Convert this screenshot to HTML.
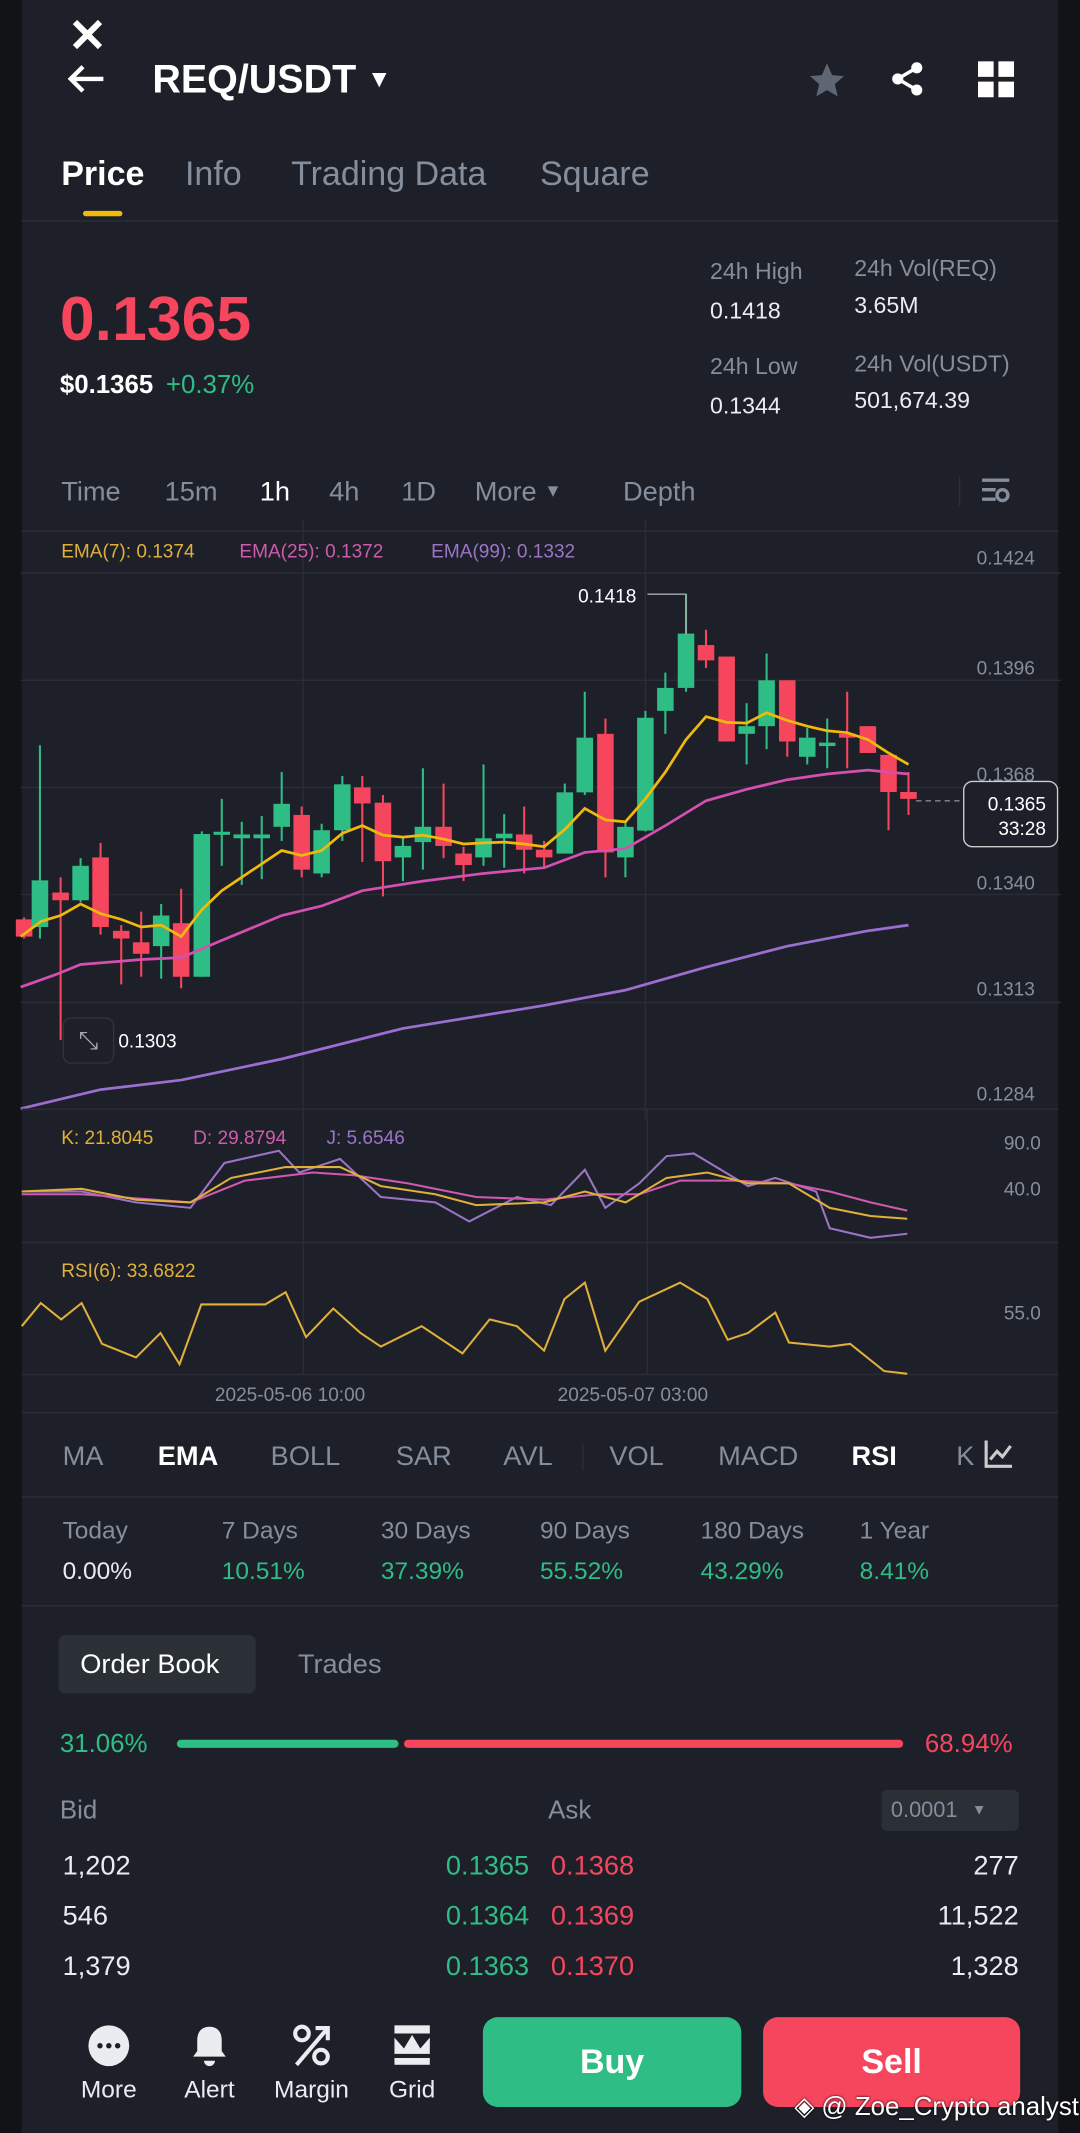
<!DOCTYPE html>
<html><head><meta charset="utf-8"><style>
*{margin:0;padding:0;box-sizing:border-box}
html,body{width:1080px;height:2132px;overflow:hidden;background:#121316}
#w{position:absolute;left:0;top:0;width:794px;height:1568px;transform:scale(1.36020);transform-origin:0 0;font-family:"Liberation Sans",sans-serif;color:#eaecef}
#p{position:absolute;left:16px;top:0;width:762px;height:1568px;background:#1e2029}
.t{position:absolute;white-space:nowrap;line-height:1}
.g{color:#848e9c}.gr{color:#2ebd85}.rd{color:#f6465d}.y{color:#f0b90b}
.ln{position:absolute;left:16px;width:762px;height:1px;background:#2b2f36}
</style></head><body><div id="w"><div id="p"></div>
<div class="t" style="left:50px;top:10px;font-size:34px;font-weight:bold;color:#fff">✕</div>
<svg style="position:absolute;left:48px;top:46px" width="30" height="24"><path d="M28 12H4M13 3L4 12l9 9" stroke="#fff" stroke-width="3.2" fill="none"/></svg>
<div class="t" style="left:112px;top:45px;font-size:29px;font-weight:bold;color:#fff">REQ/USDT <span style="font-size:18px;vertical-align:4px">▼</span></div>
<svg style="position:absolute;left:593px;top:44px" width="30" height="30" viewBox="0 0 24 24"><path d="M12 2l3 7 7 .6-5.4 4.7 1.7 7.2L12 17.8 5.7 21.5l1.7-7.2L2 9.6 9 9z" fill="#5e6673"/></svg>
<svg style="position:absolute;left:653px;top:43px" width="28" height="30" viewBox="0 0 24 24"><circle cx="18" cy="5" r="3.5" fill="#fff"/><circle cx="6" cy="12" r="3.5" fill="#fff"/><circle cx="18" cy="19" r="3.5" fill="#fff"/><path d="M18 5L6 12l12 7" stroke="#fff" stroke-width="2.2" fill="none"/></svg>
<svg style="position:absolute;left:719px;top:45px" width="27" height="27"><rect x="0" y="0" width="11.5" height="11.5" fill="#fff"/><rect x="15" y="0" width="11.5" height="11.5" fill="#fff"/><rect x="0" y="15" width="11.5" height="11.5" fill="#fff"/><rect x="15" y="15" width="11.5" height="11.5" fill="#fff"/></svg>
<div class="t" style="left:45px;top:116px;font-size:25px;font-weight:bold;color:#fff">Price</div>
<div class="t g" style="left:136px;top:116px;font-size:25px">Info</div>
<div class="t g" style="left:214px;top:116px;font-size:25px">Trading Data</div>
<div class="t g" style="left:397px;top:116px;font-size:25px">Square</div>
<div style="position:absolute;left:61px;top:155px;width:29px;height:4px;background:#f0b90b;border-radius:2px"></div>
<div class="ln" style="top:162px"></div>
<div class="t rd" style="left:44px;top:211px;font-size:46px;font-weight:bold">0.1365</div>
<div class="t" style="left:44px;top:274px;font-size:19px;font-weight:bold;color:#fff">$0.1365 <span class="gr" style="font-weight:normal;margin-left:4px">+0.37%</span></div>
<div class="t g" style="left:522px;top:191px;font-size:17px">24h High</div>
<div class="t" style="left:522px;top:220px;font-size:17px">0.1418</div>
<div class="t g" style="left:522px;top:261px;font-size:17px">24h Low</div>
<div class="t" style="left:522px;top:290px;font-size:17px">0.1344</div>
<div class="t g" style="left:628px;top:189px;font-size:17px">24h Vol(REQ)</div>
<div class="t" style="left:628px;top:216px;font-size:17px">3.65M</div>
<div class="t g" style="left:628px;top:259px;font-size:17px">24h Vol(USDT)</div>
<div class="t" style="left:628px;top:286px;font-size:17px">501,674.39</div>
<div class="t g" style="left:45px;top:352px;font-size:20px">Time</div>
<div class="t g" style="left:121px;top:352px;font-size:20px">15m</div>
<div class="t" style="left:191px;top:352px;font-size:20px;color:#fff">1h</div>
<div class="t g" style="left:242px;top:352px;font-size:20px">4h</div>
<div class="t g" style="left:295px;top:352px;font-size:20px">1D</div>
<div class="t g" style="left:349px;top:352px;font-size:20px">More <span style="font-size:13px;vertical-align:3px">▼</span></div>
<div class="t g" style="left:458px;top:352px;font-size:20px">Depth</div>
<div style="position:absolute;left:705px;top:350px;width:1px;height:22px;background:#2b2f36"></div>
<svg style="position:absolute;left:720px;top:350px" width="24" height="22"><path d="M2 3h20M2 10h10M2 17h10" stroke="#848e9c" stroke-width="2.5"/><circle cx="17" cy="14" r="4" stroke="#848e9c" stroke-width="2.5" fill="none"/></svg>
<div class="ln" style="top:390px"></div>
<svg style="position:absolute;left:0;top:382px" width="794" height="441" viewBox="0 0 1568 1568" preserveAspectRatio="none">
<g stroke="#2a2d36" stroke-width="1" vector-effect="non-scaling-stroke">
<line x1="30" y1="140" x2="1540" y2="140" vector-effect="non-scaling-stroke"/><line x1="30" y1="420" x2="1540" y2="420" vector-effect="non-scaling-stroke"/><line x1="30" y1="700" x2="1540" y2="700" vector-effect="non-scaling-stroke"/><line x1="30" y1="980" x2="1540" y2="980" vector-effect="non-scaling-stroke"/><line x1="30" y1="1262" x2="1540" y2="1262" vector-effect="non-scaling-stroke"/><line x1="440" y1="0" x2="440" y2="1568" vector-effect="non-scaling-stroke"/><line x1="937" y1="0" x2="937" y2="1568" vector-effect="non-scaling-stroke"/>
</g>
<g id="c"></g>
<polyline fill="none" stroke="#9b6fd0" stroke-width="2" vector-effect="non-scaling-stroke" points="30,1540 146,1490 263,1465 409,1410 585,1330 790,1270 908,1230 1025,1170 1143,1115 1260,1075 1319,1060"/>
<polyline fill="none" stroke="#d54fb0" stroke-width="2" vector-effect="non-scaling-stroke" points="30,1222 80,1190 117,1163 205,1150 263,1145 322,1100 409,1035 467,1010 526,970 614,945 702,925 790,910 849,870 908,860 966,800 1025,735 1084,705 1143,680 1201,665 1260,655 1319,665"/>
<polyline fill="none" stroke="#f0b90b" stroke-width="2" vector-effect="non-scaling-stroke" points="30,1090 60,1050 88,1035 117,1005 146,1030 176,1045 205,1065 234,1060 263,1090 293,1020 322,970 351,935 380,900 409,865 438,878 467,865 497,820 526,800 556,825 585,830 614,825 644,835 673,848 702,845 732,843 761,848 790,855 820,810 849,755 879,785 908,790 937,730 966,660 996,575 1025,515 1055,530 1084,532 1113,505 1143,525 1172,540 1201,552 1230,557 1260,575 1290,610 1319,640"/>
<polyline fill="none" stroke="#aaa" stroke-width="1" vector-effect="non-scaling-stroke" points="940,195 996,195 996,300"/>
<line x1="1330" y1="735" x2="1400" y2="735" stroke="#888" stroke-dasharray="4 3" stroke-width="1" vector-effect="non-scaling-stroke"/>
</svg>
<script>
var d=[[35,1045,1090,1040,1095,0],[58,943,1065,590,1095,1],[88,975,995,935,1360,0],[117,905,995,885,1000,1],[146,883,1065,845,1085,0],[176,1075,1095,1060,1215,0],[205,1105,1135,1025,1195,0],[234,1035,1115,1005,1200,1],[263,1055,1195,965,1225,0],[293,822,1195,815,1195,1],[322,816,824,730,905,1],[351,823,833,790,955,1],[380,823,833,775,940,1],[409,743,803,660,840,1],[438,772,915,750,935,0],[467,812,925,795,935,1],[497,692,812,670,840,1],[526,700,742,670,895,0],[556,740,893,720,985,0],[585,853,883,830,945,1],[614,803,843,650,915,1],[644,803,853,690,885,0],[673,873,903,855,945,0],[702,833,883,640,905,1],[732,821,833,770,910,1],[761,823,863,750,925,0],[790,863,883,840,910,0],[820,713,873,690,873,1],[849,570,713,450,720,1],[879,560,870,520,935,0],[908,803,883,790,935,1],[937,518,813,500,815,1],[966,440,500,400,560,1],[996,298,440,195,450,1],[1025,328,368,288,388,0],[1055,358,580,358,580,0],[1084,540,560,480,640,1],[1113,420,540,350,600,1],[1143,420,580,420,620,0],[1172,570,620,545,640,1],[1201,583,592,520,650,1],[1230,560,570,450,650,0],[1260,540,610,540,610,0],[1290,615,712,615,812,0],[1319,712,730,660,772,0]];
var s='';d.forEach(function(a){var c=a[5]?'#2ebd85':'#f6465d';s+='<rect x="'+(a[0]-1.5)+'" y="'+a[3]+'" width="3" height="'+(a[4]-a[3])+'" fill="'+c+'"/><rect x="'+(a[0]-12)+'" y="'+a[1]+'" width="24" height="'+Math.max(4,a[2]-a[1])+'" fill="'+c+'"/>';});
document.getElementById('c').innerHTML=s;
</script>
<div class="t" style="left:45px;top:398px;font-size:14px;color:#e0b03a">EMA(7): 0.1374</div>
<div class="t" style="left:176px;top:398px;font-size:14px;color:#cf5aae">EMA(25): 0.1372</div>
<div class="t" style="left:317px;top:398px;font-size:14px;color:#9b74c8">EMA(99): 0.1332</div>
<div class="t" style="left:425px;top:431px;font-size:14px;color:#fff">0.1418</div>
<div class="t" style="left:87px;top:758px;font-size:14px;color:#fff">0.1303</div>
<div style="position:absolute;left:46px;top:748px;width:38px;height:34px;border:1px solid #333;border-radius:6px;color:#aaa;font-size:18px;text-align:center;line-height:32px">⤡</div>
<div class="t g" style="left:718px;top:403px;font-size:14px">0.1424</div>
<div class="t g" style="left:718px;top:484px;font-size:14px">0.1396</div>
<div class="t g" style="left:718px;top:562px;font-size:14px">0.1368</div>
<div class="t g" style="left:718px;top:642px;font-size:14px">0.1340</div>
<div class="t g" style="left:718px;top:720px;font-size:14px">0.1313</div>
<div class="t g" style="left:718px;top:797px;font-size:14px">0.1284</div>
<div style="position:absolute;left:708px;top:574px;width:70px;height:49px;border:1.5px solid #ccc;border-radius:7px;background:#1e2029;font-size:14px;color:#fff;text-align:right;padding:7px 8px 0 0;line-height:18px">0.1365<br>33:28</div>
<div class="ln" style="top:815px;background:#2a2d36"></div>
<div class="t" style="left:45px;top:829px;font-size:14px;color:#e0b03a">K: 21.8045</div>
<div class="t" style="left:142px;top:829px;font-size:14px;color:#cf5aae">D: 29.8794</div>
<div class="t" style="left:240px;top:829px;font-size:14px;color:#9b74c8">J: 5.6546</div>
<div class="t g" style="left:738px;top:833px;font-size:14px">90.0</div>
<div class="t g" style="left:738px;top:867px;font-size:14px">40.0</div>
<div class="ln" style="top:913px;background:#2a2d36"></div>
<div class="t" style="left:45px;top:927px;font-size:14px;color:#e0b03a">RSI(6): 33.6822</div>
<div class="t g" style="left:738px;top:958px;font-size:14px">55.0</div>
<div class="ln" style="top:1010px;background:#2a2d36"></div>
<svg style="position:absolute;left:0;top:0" width="794" height="1040">
<line x1="223" y1="815" x2="223" y2="1010" stroke="#2a2d36"/><line x1="476" y1="815" x2="476" y2="1010" stroke="#2a2d36"/>
<polyline fill="none" stroke="#9b74c8" stroke-width="1.5" points="16,876 60,876 100,884 140,888 165,855 205,846 220,862 250,852 280,880 320,884 345,898 380,880 405,886 430,860 445,888 470,870 490,850 510,848 530,860 550,872 570,866 600,876 610,903 640,910 667,907"/>
<polyline fill="none" stroke="#cf5aae" stroke-width="1.5" points="16,878 60,878 140,884 180,868 230,862 260,864 300,870 350,880 400,882 440,878 470,878 500,868 540,868 580,870 610,876 640,884 667,890"/>
<polyline fill="none" stroke="#e0b03a" stroke-width="1.5" points="16,876 60,874 100,882 140,884 170,866 210,858 250,858 280,872 320,878 350,886 400,884 430,876 460,884 490,866 520,862 550,870 580,870 610,888 640,894 667,896"/>
<polyline fill="none" stroke="#e0b03a" stroke-width="1.5" points="16,975 30,958 45,970 60,958 75,988 100,998 118,980 132,1003 148,959 195,959 210,950 225,983 245,962 265,980 280,990 310,975 340,995 360,970 380,975 400,993 415,955 430,943 445,993 470,957 500,943 520,955 535,985 550,980 570,965 580,987 610,990 625,988 650,1008 667,1010"/>
</svg>
<div class="t g" style="left:158px;top:1018px;font-size:14px">2025-05-06 10:00</div>
<div class="t g" style="left:410px;top:1018px;font-size:14px">2025-05-07 03:00</div>
<div class="ln" style="top:1038px"></div>
<div class="t g" style="left:46px;top:1061px;font-size:20px">MA</div>
<div class="t" style="left:116px;top:1061px;font-size:20px;color:#fff;font-weight:bold">EMA</div>
<div class="t g" style="left:199px;top:1061px;font-size:20px">BOLL</div>
<div class="t g" style="left:291px;top:1061px;font-size:20px">SAR</div>
<div class="t g" style="left:370px;top:1061px;font-size:20px">AVL</div>
<div style="position:absolute;left:428px;top:1061px;width:1px;height:20px;background:#2b2f36"></div>
<div class="t g" style="left:448px;top:1061px;font-size:20px">VOL</div>
<div class="t g" style="left:528px;top:1061px;font-size:20px">MACD</div>
<div class="t" style="left:626px;top:1061px;font-size:20px;color:#fff;font-weight:bold">RSI</div>
<div class="t g" style="left:703px;top:1061px;font-size:20px">K</div>
<svg style="position:absolute;left:723px;top:1058px" width="22" height="22"><path d="M2 1v19h19M5 15l5-6 4 4 6-8" stroke="#ccc" stroke-width="2.3" fill="none"/></svg>
<div class="ln" style="top:1100px"></div>
<div class="t g" style="left:46px;top:1116px;font-size:18px">Today</div>
<div class="t g" style="left:163px;top:1116px;font-size:18px">7 Days</div>
<div class="t g" style="left:280px;top:1116px;font-size:18px">30 Days</div>
<div class="t g" style="left:397px;top:1116px;font-size:18px">90 Days</div>
<div class="t g" style="left:515px;top:1116px;font-size:18px">180 Days</div>
<div class="t g" style="left:632px;top:1116px;font-size:18px">1 Year</div>
<div class="t" style="left:46px;top:1146px;font-size:18px">0.00%</div>
<div class="t gr" style="left:163px;top:1146px;font-size:18px">10.51%</div>
<div class="t gr" style="left:280px;top:1146px;font-size:18px">37.39%</div>
<div class="t gr" style="left:397px;top:1146px;font-size:18px">55.52%</div>
<div class="t gr" style="left:515px;top:1146px;font-size:18px">43.29%</div>
<div class="t gr" style="left:632px;top:1146px;font-size:18px">8.41%</div>
<div class="ln" style="top:1180px"></div>
<div style="position:absolute;left:43px;top:1202px;width:145px;height:43px;background:#2b2f36;border-radius:5px"></div>
<div class="t" style="left:59px;top:1214px;font-size:20px;color:#fff">Order Book</div>
<div class="t g" style="left:219px;top:1214px;font-size:20px">Trades</div>
<div class="t gr" style="left:44px;top:1273px;font-size:19px">31.06%</div>
<div style="position:absolute;left:130px;top:1279px;width:163px;height:6px;background:#2ebd85;border-radius:3px"></div>
<div style="position:absolute;left:297px;top:1279px;width:367px;height:6px;background:#f6465d;border-radius:3px"></div>
<div class="t rd" style="left:680px;top:1273px;font-size:19px">68.94%</div>
<div class="t g" style="left:44px;top:1322px;font-size:19px">Bid</div>
<div class="t g" style="left:403px;top:1322px;font-size:19px">Ask</div>
<div style="position:absolute;left:648px;top:1316px;width:101px;height:30px;background:#2b2f36;border-radius:4px;color:#848e9c;font-size:16px;line-height:30px;padding-left:7px">0.0001 <span style="font-size:11px;margin-left:6px;vertical-align:2px">▼</span></div>
<div style="position:absolute;left:0;top:1360px;width:794px;font-size:20px;line-height:1">
<div style="position:absolute;left:46px;top:2px">1,202</div><div class="gr" style="position:absolute;right:405px;top:2px">0.1365</div><div class="rd" style="position:absolute;left:405px;top:2px">0.1368</div><div style="position:absolute;right:45px;top:2px">277</div>
<div style="position:absolute;left:46px;top:39px">546</div><div class="gr" style="position:absolute;right:405px;top:39px">0.1364</div><div class="rd" style="position:absolute;left:405px;top:39px">0.1369</div><div style="position:absolute;right:45px;top:39px">11,522</div>
<div style="position:absolute;left:46px;top:76px">1,379</div><div class="gr" style="position:absolute;right:405px;top:76px">0.1363</div><div class="rd" style="position:absolute;left:405px;top:76px">0.1370</div><div style="position:absolute;right:45px;top:76px">1,328</div>
</div>
<svg style="position:absolute;left:64px;top:1488px" width="32" height="32"><circle cx="16" cy="16" r="15" fill="#eaecef"/><circle cx="9.5" cy="16" r="2" fill="#1e2029"/><circle cx="16" cy="16" r="2" fill="#1e2029"/><circle cx="22.5" cy="16" r="2" fill="#1e2029"/></svg>
<svg style="position:absolute;left:140px;top:1488px" width="28" height="32"><path d="M14 2c-6 0-9 4-9 10v8l-3 4h24l-3-4v-8c0-6-3-10-9-10z" fill="#eaecef"/><path d="M10 27a4 4 0 0 0 8 0z" fill="#eaecef"/></svg>
<svg style="position:absolute;left:214px;top:1488px" width="30" height="32"><circle cx="8" cy="7" r="5" fill="none" stroke="#eaecef" stroke-width="3"/><circle cx="22" cy="24" r="5" fill="none" stroke="#eaecef" stroke-width="3"/><path d="M4 30L27 3M18 3h9v9" stroke="#eaecef" stroke-width="3" fill="none"/></svg>
<svg style="position:absolute;left:288px;top:1488px" width="30" height="32"><rect x="2" y="1" width="26" height="6" fill="#eaecef"/><path d="M2 10l7 8 6-10 6 10 7-8v12H2z" fill="#eaecef"/><rect x="2" y="25" width="26" height="5" fill="#eaecef"/></svg>
<div class="t" style="left:0;width:160px;top:1527px;font-size:18px;text-align:center">More</div>
<div class="t" style="left:104px;width:100px;top:1527px;font-size:18px;text-align:center">Alert</div>
<div class="t" style="left:179px;width:100px;top:1527px;font-size:18px;text-align:center">Margin</div>
<div class="t" style="left:253px;width:100px;top:1527px;font-size:18px;text-align:center">Grid</div>
<div style="position:absolute;left:355px;top:1483px;width:190px;height:66px;background:#2ebd85;border-radius:11px;color:#fff;font-size:25px;font-weight:bold;text-align:center;line-height:66px">Buy</div>
<div style="position:absolute;left:561px;top:1483px;width:189px;height:66px;background:#f6465d;border-radius:11px;color:#fff;font-size:25px;font-weight:bold;text-align:center;line-height:66px">Sell</div>
<div class="t" style="left:584px;top:1540px;font-size:19px;color:#fff;text-shadow:0 0 2px #000">◈ @ Zoe_Crypto analyst</div>
</div></body></html>
